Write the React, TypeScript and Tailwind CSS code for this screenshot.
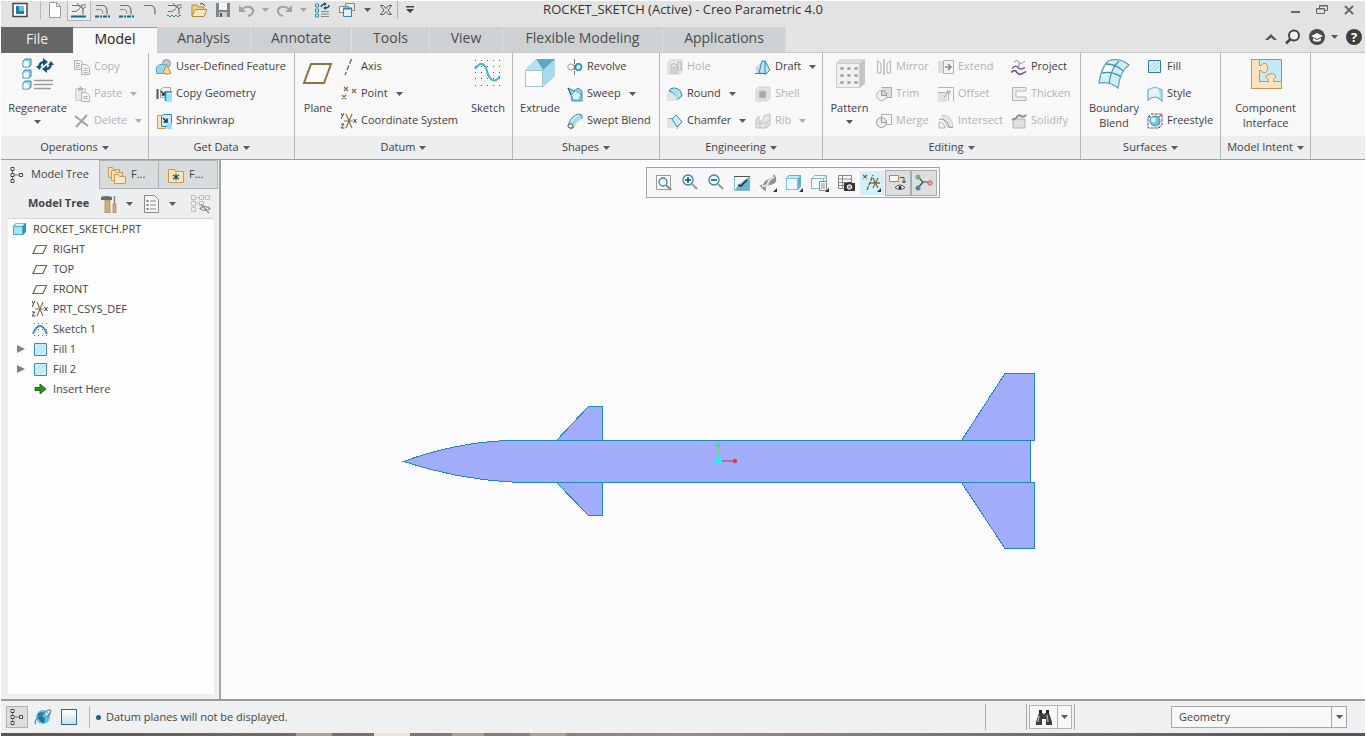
import type { ReactNode } from 'react'

type Kids = { children: ReactNode }

function Ico({ children, size = 16 }: Kids & { size?: number }) {
  return (
    <svg width={size} height={size} viewBox={`0 0 ${size} ${size}`} fill="none" className="shrink-0" aria-hidden="true">
      {children}
    </svg>
  )
}

function Caret({ className = 'text-[#5a5a5a]' }: { className?: string }) {
  return (
    <svg width="7" height="4" viewBox="0 0 7 4" className={`shrink-0 ${className}`} aria-hidden="true">
      <path d="M0 0h7L3.500 4z" fill="currentColor" />
    </svg>
  )
}

/* ---------- small ribbon icons ---------- */

const G = '#b4b4b4'
const BLUE = '#2b8cb2'
const SKY = '#cdeefa'

const copyIcon = (
  <Ico>
    <path d="M.5 1.500h6l2 2v7h-8zM2 4.500h4M2 6.500h4M2 8.500h3" stroke={G} fill="#efefef" />
    <path d="M7.500 5.500h5l3 3v7h-8z" stroke={G} fill="#f2f2f2" />
    <path d="M9.500 9.500h4M9.500 11.500h4M9.500 13.500h4" stroke={G} />
  </Ico>
)
const pasteIcon = (
  <Ico>
    <path d="M1.500 2.500h10v12h-10z" stroke="#cfcfcf" fill="#e8e8e8" />
    <path d="M4 3.500h5M5.500 1.500h2" stroke={G} strokeWidth="2" />
    <path d="M7.500 6.500h5l3 3v6h-8z" stroke={G} fill="#f4f4f4" />
    <path d="M9.500 10.500h4M9.500 12.500h4" stroke={G} />
  </Ico>
)
const deleteIcon = (
  <Ico>
    <path d="M1 3l13 10M13 2L2 14" stroke="#a2a2a2" strokeWidth="2" />
  </Ico>
)
const udfIcon = (
  <Ico>
    <circle cx="10.500" cy="4.500" r="4" fill="#c6c6d4" stroke="#8b8ba0" />
    <path d="M.5 8l3-2.500h7V12L8 14.500H.5z" fill="#9ad3ea" stroke="#5fabca" />
    <path d="M10.500 5.500L15 14q-4 2.500-8 0z" fill="#f3d49a" stroke="#b8924f" />
  </Ico>
)
const copyGeomIcon = (
  <Ico>
    <path d="M1.500 3v10" stroke="#555" strokeWidth="2" />
    <path d="M4.500 3.500l3-2h7v4h-5v6h-5z" fill="#f0f0f0" stroke="#a5a5a5" />
    <path d="M5 5l3.500 4M9 5.500V9H5.500" stroke="#333" strokeWidth="1.500" />
    <path d="M10 8h6v8h-6z" fill="#8fe3fa" />
    <path d="M9.500 15V7.500L11 6h5" stroke={BLUE} strokeWidth="1.500" />
  </Ico>
)
const shrinkIcon = (
  <Ico>
    <path d="M1.500 2.500h8v13h-8z" fill="#f9e4b9" stroke="#cc9a50" />
    <path d="M5.500 3.500l2-2h8v9l-3 3h-7z" fill="#c8ecf9" stroke={BLUE} />
    <path d="M7 5l4 4M11 5.500V9H7.500" stroke="#14364a" strokeWidth="1.500" />
    <path d="M11 10h5v6h-5z" fill="#8fe3fa" />
  </Ico>
)
const axisIcon = (
  <Ico>
    <path d="M10.500 0L4 16" stroke="#6f6048" strokeWidth="1.300" strokeDasharray="5 2" />
  </Ico>
)
const pointIcon = (
  <Ico>
    <path d="M3 1l4 4M7 1L3 5M11 3l4 4M15 3l-4 4M1 9l4 4M5 9l-4 4" stroke="#8a6a3c" strokeWidth="1.300" />
  </Ico>
)
const csysIcon = (
  <Ico>
    <path d="M3 8h9M5 1l6 14M11 1L5 15" stroke="#8f7144" strokeWidth="1.200" />
    <path d="M0 0l1.500 3M3 0L0 6M12.500 6l3 4M15.500 6l-3 4M0 11h3l-3 4h3.500" stroke="#444" />
  </Ico>
)
const revolveIcon = (
  <Ico>
    <ellipse cx="4" cy="8" rx="3.300" ry="3" stroke="#8fa0a9" fill="#fff" />
    <ellipse cx="11.500" cy="8" rx="3" ry="3.300" stroke={BLUE} strokeWidth="1.500" fill="#c9ecf9" />
    <path d="M7.500 0v16" stroke="#777" strokeDasharray="5 1" />
  </Ico>
)
const sweepIcon = (
  <Ico>
    <path d="M1 2l6 3 4-3 4 3v10H5L4 9z" fill="#8cd3ec" stroke={BLUE} />
    <path d="M4.500 9L8 5l6 3-2 6H6z" fill="#d8f2fb" stroke="#5fb0cd" />
    <path d="M1 2l3 7" stroke="#42515a" />
  </Ico>
)
const sweptIcon = (
  <Ico>
    <path d="M1 13Q3 4 11 1l4 1v4Q9 8 7 14l-3 2z" fill="#9bdaf1" stroke="#4f8eaa" />
    <path d="M7 14Q9 8 15 6M4 9q3-5 8-7" stroke="#fff" />
    <ellipse cx="3.500" cy="13" rx="2.500" ry="2" fill="#fff" stroke="#555" />
  </Ico>
)
const holeIcon = (
  <Ico>
    <path d="M1 4l2-3h12v12l-2 2H1z" fill="#e9e9e9" stroke="#d3d3d3" />
    <path d="M4 15V6q3-3 6 0v9M6 15V8h2v7M11 3h3v8h-3z" stroke={G} />
  </Ico>
)
const roundIcon = (
  <Ico>
    <path d="M0 6h9v9H0z" fill="#e1e4e6" />
    <path d="M2 5q1-3 5-3 7 0 8 8l-5 4Q10 7 2 5z" fill="#9adcf3" stroke={BLUE} />
    <path d="M10 14Q10 7 5 5M7 3q5 1 6 8" stroke="#def5fd" />
  </Ico>
)
const chamferIcon = (
  <Ico>
    <path d="M0 5h8v10H0z" fill="#e1e4e6" />
    <path d="M5 6l4-4 6 7-5 5z" fill="#c9effb" stroke={BLUE} />
    <path d="M1 5.500h4M10 14v2" stroke="#9aa4a9" />
  </Ico>
)
const draftIcon = (
  <Ico>
    <path d="M0 9l6-6v10l-4 2z" fill="#d5d9dc" />
    <path d="M4 14l3-12h3l5 9-4 4z" fill="#b7e6f7" stroke={BLUE} />
    <path d="M10 2v12M0 14.500h11" stroke={BLUE} />
  </Ico>
)
const shellIcon = (
  <Ico>
    <path d="M1 3l2-2h12v11l-3 3H1z" fill="#e2e2e2" stroke="#d3d3d3" />
    <path d="M4 5h7v7H4z" fill="#a8a8a8" stroke="#c8c8c8" />
  </Ico>
)
const ribIcon = (
  <Ico>
    <path d="M1 15V6l3-3v5q4 1 5-5l6-2v11l-4 3z" fill="#e6e6e6" stroke="#c0c0c0" />
    <path d="M1 10h10v5M5 15v-5M11 10l4-3" stroke="#c0c0c0" />
  </Ico>
)
const mirrorIcon = (
  <Ico>
    <path d="M8 0v16" stroke="#999" />
    <path d="M1.500 14V2q4 1 3.500 6v6zM14.500 14V2q-4 1-3.500 6v6z" stroke={G} fill="#f4f4f4" />
  </Ico>
)
const trimIcon = (
  <Ico>
    <path d="M5.500 1.500h10v10h-5" fill="#ddd" stroke="#aaa" />
    <circle cx="5.500" cy="9.500" r="5" stroke="#b0b0b0" fill="#f1f1f1" />
    <path d="M5.500 9.500v-5q5 0 5 5z" fill="#d2d2d2" stroke="#999" />
  </Ico>
)
const mergeIcon = (
  <Ico>
    <circle cx="5.500" cy="9.500" r="5" stroke="#999" fill="#ececec" />
    <path d="M5.500 4.500v-3h10v10h-5Q11 5 5.500 4.500z" fill="#f8f8f8" stroke="#aaa" />
    <path d="M5.500 5v4.500h5" stroke="#999" />
  </Ico>
)
const extendIcon = (
  <Ico>
    <path d="M0 2h6v12H0z" fill="#dedede" />
    <path d="M5.500 1.500h10v13h-10z" stroke="#b0b0b0" fill="#f4f4f4" />
    <path d="M7 8h6M10 5l3 3-3 3" stroke="#888" strokeWidth="1.500" />
  </Ico>
)
const offsetIcon = (
  <Ico>
    <path d="M0 6h9v10H0z" fill="#e2e2e2" />
    <path d="M0 1.500h15.500V15M10.500 15V6.500H0" stroke={G} />
    <path d="M6 11l6-6M8.500 5H12v3.500" stroke="#8a8a8a" strokeDasharray="2 1" />
  </Ico>
)
const intersectIcon = (
  <Ico>
    <path d="M4 2q10 0 11 12H9z" fill="#e6e6e6" stroke="#ccc" />
    <path d="M1 6q9 0 10 8.500h4" stroke="#999" />
    <path d="M1 9q5 0 6 6H1z" fill="#f4f4f4" stroke={G} />
  </Ico>
)
const projectIcon = (
  <Ico>
    <path d="M3 3q3-3 5 0t6-1" stroke="#a98f6c" />
    <path d="M1 9.500q4-4 6-1t7 0" stroke="#8a62b8" strokeWidth="1.500" />
    <path d="M0 13.500q4-4 6 0t9-1" stroke="#5d4a80" strokeWidth="1.500" />
    <path d="M8 4v4" stroke="#777" />
  </Ico>
)
const thickenIcon = (
  <Ico>
    <path d="M15 1.500H1.500v13H15V11H5V5h10z" stroke="#b4b4b4" fill="#eee" />
  </Ico>
)
const solidifyIcon = (
  <Ico>
    <path d="M2 6h12v9H2z" fill="#dfdfdf" stroke={G} />
    <path d="M1 6q3 1 5-2t4-1 5-1" stroke="#8f8f8f" strokeWidth="2" />
  </Ico>
)
const fillIcon = (
  <Ico>
    <path d="M1.500 1.500h12v12h-12z" fill={SKY} stroke="#2f7c9f" />
    <path d="M3 8l5-5M3 12l9-9M7 12l5-5" stroke="#9dd5e9" />
  </Ico>
)
const styleIcon = (
  <Ico>
    <path d="M1 14V4q7-5 14 0v11q-4-4-7-4t-7 3z" fill="#def3fb" stroke="#78a7bb" strokeWidth="1.200" />
    <path d="M12 4q2 1 1.500 8" stroke="#9bd9f0" strokeWidth="2" />
  </Ico>
)
const freestyleIcon = (
  <Ico>
    <path d="M1 4l3-3h11v11l-3 3H1zM1 4h11v11M12 4l3-3" stroke="#555" strokeDasharray="3 1" />
    <circle cx="8" cy="8" r="5" fill="#6fc3e2" stroke="#4697b6" />
    <circle cx="6.500" cy="7" r="2.500" fill="#d6f3fc" />
  </Ico>
)

/* ---------- large ribbon icons ---------- */

function MiniCube({ x, y }: { x: number; y: number }) {
  return (
    <g>
      <path d={`M${x} ${y + 2}l2-2h6v6l-2 2h-6z`} fill="#8fd4ec" stroke={BLUE} />
      <path d={`M${x + 0.5} ${y + 2.5}h5v5h-5z`} fill="#fff" />
    </g>
  )
}

const regenerateIcon = (
  <Ico size={32}>
    <MiniCube x={1} y={1} />
    <MiniCube x={1} y={12} />
    <MiniCube x={1} y={23} />
    <path d="M12 22.500h19M12 26.500h19M12 30.500h17" stroke="#9a9a9a" strokeWidth="1.500" />
    <path d="M17 9q1-5 5-5M29 6q-1 5-5 5" stroke="#17567a" strokeWidth="2.500" />
    <path d="M21 0l5 4-5 4zM25 7l-5 4 5 4zM14 8h6l-3 4zM26 7h6l-3-4z" fill="#17567a" />
  </Ico>
)
const planeIcon = (
  <Ico size={32}>
    <path d="M9 6h20l-7 19H2z" stroke="#937343" strokeWidth="2" fill="#fdfdfb" />
  </Ico>
)
const sketchIcon = (
  <Ico size={32}>
    <g fill="#555">
      {[3, 9, 15, 21, 27].map((x) => [2, 8, 14, 20, 27].map((y) => <rect key={`${x}-${y}`} x={x} y={y} width="1" height="1" />))}
    </g>
    <path d="M3 11C8 3 13 5 15 13s7 14 13 5" stroke="#4bb0d8" strokeWidth="2" />
  </Ico>
)
const extrudeIcon = (
  <Ico size={32}>
    <path d="M1 12L12 1h19v17L19 29H1z" fill="#8ccde5" />
    <path d="M12 1h19v17L19 12z" fill="#5ba9c8" />
    <path d="M1 12L12 1l7 11z" fill="#b5e2f2" />
    <path d="M19 12L31 1v17L19 29z" fill="#a8d9ec" />
    <path d="M1.500 12.500h17v16h-17z" fill="#fff" stroke="#9fc7d8" />
  </Ico>
)
const patternIcon = (
  <Ico size={32}>
    <path d="M2 5l4-4h25v24l-5 5H2z" fill="#dcdcdc" />
    <path d="M2.500 5.500h23v24h-23z" fill="#f0f0f0" stroke="#ccc" />
    <path d="M26 5l5-4v24l-5 5z" fill="#c6c6c6" />
    {[6, 13, 20].map((x) => [9, 16, 23].map((y) => <path key={`${x}-${y}`} d={`M${x} ${y}h4v3h-4z`} fill="#9d9d9d" stroke="#fff" strokeWidth=".5" />))}
  </Ico>
)
const boundaryIcon = (
  <Ico size={32}>
    <path d="M1 25Q3 10 10 3q11-4 21 4-9 6-11 23-8-7-19-5z" fill="#d0effa" stroke="#6fa0b4" strokeWidth="1.300" />
    <path d="M19 9q-7-4-11-2l-5 11q7-2 11 0z" fill="#fbfeff" />
    <path d="M11 26Q13 10 21 3M4 15q11-2 19 4M8 6q10 0 17 7" stroke="#3b98bc" strokeWidth="1.300" />
  </Ico>
)
const componentIcon = (
  <Ico size={32}>
    <path d="M1.500 1.500h30v29h-30z" fill="#c2ebf9" stroke="#58a5c2" />
    <path d="M1.500 1.500h8v6h2q1-3 4-2 3 2 2 6t-5 3l-1-2h-2v11h9v-2q-3-1-2-4 2-2 6-2 4 1 3 4l-2 2v2h8v7h-30z" fill="#f9e3bd" stroke="#c4965a" />
  </Ico>
)

/* ---------- ribbon pieces ---------- */

type ToolProps = { icon: ReactNode; label: string; disabled?: boolean; menu?: boolean }

function Tool({ icon, label, disabled, menu }: ToolProps) {
  return (
    <button
      type="button"
      disabled={disabled}
      className={`flex h-[27px] items-center gap-1 whitespace-nowrap ${disabled ? 'text-[#b3b3b3]' : 'text-[#3f3f3f]'}`}
    >
      {icon}
      {label}
      {menu && <span className="pl-1"><Caret className={disabled ? 'text-[#adadad]' : 'text-[#5a5a5a]'} /></span>}
    </button>
  )
}

function Big({ icon, label, menu, className }: { icon: ReactNode; label: string; menu?: boolean; className: string }) {
  return (
    <button type="button" className={`flex shrink-0 flex-col items-center justify-start pt-[5px] leading-[15px] text-[#3f3f3f] ${className}`}>
      {icon}
      <span className="mt-[10px] whitespace-pre-line">{label}</span>
      {menu && <span className="mt-[5px]"><Caret /></span>}
    </button>
  )
}

function Col({ tools, className = '' }: { tools: ToolProps[]; className?: string }) {
  return (
    <div className={`flex shrink-0 flex-col items-start ${className}`}>
      {tools.map((t) => <Tool key={t.label} {...t} />)}
    </div>
  )
}

function Group({ title, className, children }: Kids & { title: string; className: string }) {
  return (
    <section className={`flex shrink-0 flex-col border-r border-[#b4b6b8] ${className}`}>
      <div className="flex h-[83px]">{children}</div>
      <button type="button" className="flex h-[23px] items-center justify-center gap-1 whitespace-nowrap bg-[#eceef0] text-[#3f3f3f]">
        {title} <Caret />
      </button>
    </section>
  )
}

function Ribbon() {
  return (
    <div className="flex border-b border-[#9b9da0] bg-[#f8f8f9] text-[11px]">
      <Group title="Operations" className="w-[148px]">
        <Big icon={regenerateIcon} label="Regenerate" menu className="w-[73px]" />
        <Col
          tools={[
            { icon: copyIcon, label: 'Copy', disabled: true },
            { icon: pasteIcon, label: 'Paste', disabled: true, menu: true },
            { icon: deleteIcon, label: 'Delete', disabled: true, menu: true },
          ]}
        />
      </Group>
      <Group title="Get Data" className="w-[146px]">
        <Col
          className="pl-[7px]"
          tools={[
            { icon: udfIcon, label: 'User-Defined Feature' },
            { icon: copyGeomIcon, label: 'Copy Geometry' },
            { icon: shrinkIcon, label: 'Shrinkwrap' },
          ]}
        />
      </Group>
      <Group title="Datum" className="w-[218px]">
        <Big icon={planeIcon} label="Plane" className="w-[46px]" />
        <Col
          className="w-[122px]"
          tools={[
            { icon: axisIcon, label: 'Axis' },
            { icon: pointIcon, label: 'Point', menu: true },
            { icon: csysIcon, label: 'Coordinate System' },
          ]}
        />
        <Big icon={sketchIcon} label="Sketch" className="w-[50px]" />
      </Group>
      <Group title="Shapes" className="w-[147px]">
        <Big icon={extrudeIcon} label="Extrude" className="w-[54px]" />
        <Col
          tools={[
            { icon: revolveIcon, label: 'Revolve' },
            { icon: sweepIcon, label: 'Sweep', menu: true },
            { icon: sweptIcon, label: 'Swept Blend' },
          ]}
        />
      </Group>
      <Group title="Engineering" className="w-[163px]">
        <Col
          className="w-[95px] pl-[7px]"
          tools={[
            { icon: holeIcon, label: 'Hole', disabled: true },
            { icon: roundIcon, label: 'Round', menu: true },
            { icon: chamferIcon, label: 'Chamfer', menu: true },
          ]}
        />
        <Col
          tools={[
            { icon: draftIcon, label: 'Draft', menu: true },
            { icon: shellIcon, label: 'Shell', disabled: true },
            { icon: ribIcon, label: 'Rib', disabled: true, menu: true },
          ]}
        />
      </Group>
      <Group title="Editing" className="w-[258px]">
        <Big icon={patternIcon} label="Pattern" menu className="w-[53px]" />
        <Col
          className="w-[62px]"
          tools={[
            { icon: mirrorIcon, label: 'Mirror', disabled: true },
            { icon: trimIcon, label: 'Trim', disabled: true },
            { icon: mergeIcon, label: 'Merge', disabled: true },
          ]}
        />
        <Col
          className="w-[73px]"
          tools={[
            { icon: extendIcon, label: 'Extend', disabled: true },
            { icon: offsetIcon, label: 'Offset', disabled: true },
            { icon: intersectIcon, label: 'Intersect', disabled: true },
          ]}
        />
        <Col
          tools={[
            { icon: projectIcon, label: 'Project' },
            { icon: thickenIcon, label: 'Thicken', disabled: true },
            { icon: solidifyIcon, label: 'Solidify', disabled: true },
          ]}
        />
      </Group>
      <Group title="Surfaces" className="w-[140px]">
        <Big icon={boundaryIcon} label={'Boundary\nBlend'} className="w-[66px]" />
        <Col
          tools={[
            { icon: fillIcon, label: 'Fill' },
            { icon: styleIcon, label: 'Style' },
            { icon: freestyleIcon, label: 'Freestyle' },
          ]}
        />
      </Group>
      <Group title="Model Intent" className="w-[90px]">
        <Big icon={componentIcon} label={'Component\nInterface'} className="w-full" />
      </Group>
      <div className="flex flex-1 flex-col justify-end">
        <div className="h-[23px] bg-[#eceef0]" />
      </div>
    </div>
  )
}

/* ---------- title bar ---------- */

const sketchCurve = <path d="M1 3.500h6q5 0 5 6v3" stroke="#6f7274" strokeWidth="1.200" />
const branches = <path d="M1 9.500q5 1 8-3M9 6l2-3h4M9 5L6 1M11 7l4-2" stroke="#6f7274" />
const innerCurve = <path d="M1 7.500h4q3 0 3 4" stroke="#8c8f91" />

function Quick({ label, className = 'w-6', children }: Kids & { label: string; className?: string }) {
  return (
    <button type="button" aria-label={label} className={`flex h-[17px] shrink-0 items-center justify-center ${className}`}>
      {children}
    </button>
  )
}

function TitleBar() {
  return (
    <header className="grid h-[26px] grid-cols-[1fr_auto_1fr] items-start bg-[#e3e3e3]">
      <div className="flex items-start">
        <Quick label="Window" className="w-[38px]">
          <Ico>
            <path d="M1 1.500h14v13H1z" fill="#fff" stroke="#45484b" strokeWidth="1.500" />
            <path d="M4 4h8v8H4z" fill="#1b7fa6" />
            <path d="M7 4h5v5H7z" fill="#66c4e6" />
          </Ico>
        </Quick>
        <span className="mx-[1px] h-[18px] w-px bg-[#b9b9b9]" />
        <Quick label="New" className="w-[25px]">
          <Ico><path d="M2.500.5h7l4 4v11h-11z" fill="#fff" stroke="#9a9a9a" /><path d="M9.500.5v4h4" stroke="#9a9a9a" /></Ico>
        </Quick>
        <span className="flex h-5 items-start border border-t-0 border-[#b5b5b5] bg-[#ececec]">
          <Quick label="Sketch view" className="w-[22px]"><Ico>{sketchCurve}{branches}<path d="M0 14.500h15" stroke="#17678c" strokeWidth="2" /></Ico></Quick>
        </span>
        <Quick label="Hidden line"><Ico>{sketchCurve}{innerCurve}<path d="M0 14.500h16" stroke="#17678c" strokeWidth="2" strokeDasharray="4 1 2 1" /></Ico></Quick>
        <Quick label="No hidden"><Ico>{sketchCurve}{innerCurve}<path d="M0 14.500h16" stroke="#17678c" strokeWidth="2" strokeDasharray="4 1 2 1" /></Ico></Quick>
        <Quick label="Wireframe"><Ico>{sketchCurve}</Ico></Quick>
        <Quick label="Spline"><Ico>{sketchCurve}{branches}<path d="M0 14q1-2 2 0t2 0 2 0 2 0 2 0 2 0 2 0" stroke="#3d8a7c" /></Ico></Quick>
        <Quick label="Open">
          <Ico>
            <path d="M1 14V3h5l1 2h6v9z" fill="#f4d28b" stroke="#b08a45" />
            <path d="M1 14.500l3-7h12l-3 7z" fill="#fbe7b8" stroke="#b08a45" />
            <path d="M9 2q3-2 5 2" stroke="#444" />
          </Ico>
        </Quick>
        <Quick label="Save">
          <Ico>
            <path d="M1 1h14v14H1z" fill="#7d868d" />
            <path d="M4 1h8v7H4z" fill="#f2f5f7" />
            <path d="M4 10h8v5H4z" fill="#c9ced2" />
            <path d="M5 11h2v4H5z" fill="#555" />
          </Ico>
        </Quick>
        <Quick label="Undo"><Ico><path d="M3 7q4-3 8-2 4 2 3 5t-5 4" stroke="#a3a3a3" strokeWidth="2" /><path d="M0 3v7h7z" fill="#a3a3a3" /></Ico></Quick>
        <Quick label="Undo list" className="w-3"><Caret className="text-[#a5a5a5]" /></Quick>
        <Quick label="Redo" className="w-[26px]"><Ico><path d="M13 7Q9 4 5 5 1 7 2 10t5 4" stroke="#a3a3a3" strokeWidth="2" /><path d="M16 3v7H9z" fill="#a3a3a3" /></Ico></Quick>
        <Quick label="Redo list" className="w-3"><Caret className="text-[#a5a5a5]" /></Quick>
        <Quick label="Regenerate" className="w-[26px]">
          <Ico>
            <path d="M1.500 2h3v3h-3zM1.500 7h3v3h-3zM1.500 12h3v3h-3z" fill="#d9f1fa" stroke={BLUE} />
            <path d="M7 9.500h8M7 12h8M7 14.500h8" stroke="#888" />
            <path d="M7 5q1-3 4-3M15 3q0 3-4 3" stroke="#17567a" strokeWidth="1.500" />
            <path d="M10 0l3 2-3 2zM12 4L9 6l3 2z" fill="#17567a" />
          </Ico>
        </Quick>
        <Quick label="Windows">
          <Ico>
            <path d="M6.500 1.500h9v7h-9z" fill="#e8e8e8" stroke="#888" />
            <path d="M.5 4.500h9v6h-9z" fill="#f4f4f4" stroke="#888" />
            <path d="M4.500 6.500h8v8h-8z" fill="#dff3fb" stroke={BLUE} />
            <path d="M4 6.500h9" stroke={BLUE} strokeWidth="2" />
          </Ico>
        </Quick>
        <Quick label="Window list" className="w-4"><Caret /></Quick>
        <Quick label="Close window" className="w-[22px]">
          <Ico><path d="M2.500 3.500h3l2.500 3 2.500-3h3L10 8l3.500 4.500h-3L8 9.500l-2.500 3h-3L6 8z" stroke="#5a5a5a" /></Ico>
        </Quick>
        <span className="h-[18px] w-px bg-[#b0b0b0]" />
        <Quick label="Customize toolbar">
          <svg width="8" height="8" viewBox="0 0 8 8" aria-hidden="true"><path d="M0 0h8v1.500H0zM0 3h8L4 7z" fill="#444" /></svg>
        </Quick>
      </div>
      <h1 className="text-[13px] leading-[17px] whitespace-nowrap text-[#333]">ROCKET_SKETCH (Active) - Creo Parametric 4.0</h1>
      <div className="flex justify-end pr-[3px]">
        <Quick label="Minimize" className="w-[27px]"><Ico><path d="M4 10h9" stroke="#666" strokeWidth="2" /></Ico></Quick>
        <Quick label="Restore" className="w-[27px]">
          <Ico><path d="M5.500 6V3.500h8v5H11M2.500 6.500h8v5h-8z" stroke="#666" /><path d="M5 4h9M2 7h9" stroke="#666" /></Ico>
        </Quick>
        <Quick label="Close" className="w-[27px]"><Ico><path d="M4 4l8 8M12 4l-8 8" stroke="#666" strokeWidth="1.800" /></Ico></Quick>
      </div>
    </header>
  )
}

const TABS = [
  { name: 'File', width: 'w-[72px]' },
  { name: 'Model', width: 'w-[84px]' },
  { name: 'Analysis', width: 'w-[94px]' },
  { name: 'Annotate', width: 'w-[101px]' },
  { name: 'Tools', width: 'w-[78px]' },
  { name: 'View', width: 'w-[73px]' },
  { name: 'Flexible Modeling', width: 'w-[160px]' },
  { name: 'Applications', width: 'w-[123px]' },
]

function tabStyle(name: string) {
  if (name === 'File') return 'h-[26px] bg-[#666] text-[#eee]'
  if (name === 'Model') return 'h-[26px] bg-[#f8f8f9] text-[#222] border-t border-[#999]'
  return 'h-[25px] bg-[#cdd1d3] text-[#4c4c4c] border-r border-r-[#dcdfe0]'
}

function TabBar() {
  return (
    <div className="flex h-[26px] items-start justify-between border-b border-[#c6c8ca] bg-[#e3e3e3]">
      <nav className="flex items-start">
        {TABS.map((t) => (
          <button key={t.name} type="button" className={`pb-[3px] text-[14px] leading-[20px] whitespace-nowrap ${t.width} ${tabStyle(t.name)}`}>
            {t.name}
          </button>
        ))}
      </nav>
      <div className="flex h-5 items-center gap-2 pr-[3px]">
        <button type="button" aria-label="Collapse ribbon">
          <svg width="12" height="6" viewBox="0 0 12 6"><path d="M0 6l6-6 6 6H9L6 3.500 3 6z" fill="#555" /></svg>
        </button>
        <button type="button" aria-label="Search">
          <Ico><circle cx="9" cy="6.500" r="5" stroke="#444" strokeWidth="2" fill="#f4f4f4" /><path d="M5.500 10L1 14.500" stroke="#444" strokeWidth="2.500" /></Ico>
        </button>
        <button type="button" aria-label="Learning" className="flex items-center gap-1.5">
          <Ico><circle cx="8" cy="8" r="8" fill="#4a4a4a" /><path d="M2 7l6-3 6 3-6 3zM4 9v2.500q4 2.500 8 0V9L8 11z" fill="#f4f4f4" /></Ico>
          <Caret />
        </button>
        <button type="button" aria-label="Help" className="flex size-4 items-center justify-center rounded-full bg-[#3e3e3e] text-[13px] leading-4 font-bold text-white">?</button>
      </div>
    </div>
  )
}

/* ---------- model tree ---------- */

const treeIcon = (
  <Ico>
    <path d="M3.500 4v9M5 8h6" stroke="#777" />
    <path d="M2 .5h3v3H2zM2 6.500h3v3H2zM2 12.500h3v3H2zM10.500 6.500h3v3h-3z" fill="#fff" stroke="#444" />
  </Ico>
)
const smallPlane = <Ico><path d="M4.500 4.500h10l-3.500 8H1z" stroke="#7b6240" strokeWidth="1.200" /></Ico>
const treeSketch = (
  <Ico>
    <path d="M1 13Q4 5 8 5t7 8" stroke="#3b94b8" strokeWidth="2" />
    <path d="M2 2.500h14M2 8.500h14M2 14.500h14" stroke="#777" strokeDasharray="1 3" />
  </Ico>
)
const partIcon = (
  <Ico>
    <path d="M2 5l3-3h10v9l-3 3H2z" fill="#2f95bc" />
    <path d="M2.500 5.500h9v8h-9z" fill="#a9e2f6" stroke="#4cabd0" />
    <path d="M3 5l2.500-2.500H14L11.500 5z" fill="#d9f3fc" />
  </Ico>
)
const treeFill = (
  <Ico>
    <path d="M2.500 2.500h12v12h-12z" fill="#c9f1fd" stroke="#3c8db1" />
    <path d="M4 9l5-5M4 13l9-9M8 13l5-5" stroke="#a2dcf0" />
  </Ico>
)
const insertIcon = (
  <Ico><path d="M3 6.500h5V3l6 5-6 5V9.500H3z" fill="#1e9a16" stroke="#15470f" strokeWidth=".8" /></Ico>
)
const foldersIcon = (
  <Ico size={20}>
    <path d="M1.500 2.500h4l1 2h6v8h-11z" fill="#f7deaa" stroke="#c29a5d" />
    <path d="M4.500 5.500h4l1 2h6v8h-11z" fill="#f7deaa" stroke="#c29a5d" />
    <path d="M7.500 9.500h4l1 2h6v7h-11z" fill="#fbe9c4" stroke="#c29a5d" />
  </Ico>
)
const favoritesIcon = (
  <Ico size={18}>
    <path d="M1.500 3.500h6l1 2h8v11h-15z" fill="#fbe3b2" stroke="#c29a5d" />
    <path d="M9 7.500v7M6 9l6 4M12 9l-6 4" stroke="#15506d" strokeWidth="1.200" />
  </Ico>
)

const ITEMS = [
  { name: 'RIGHT', icon: smallPlane },
  { name: 'TOP', icon: smallPlane },
  { name: 'FRONT', icon: smallPlane },
  { name: 'PRT_CSYS_DEF', icon: csysIcon },
  { name: 'Sketch 1', icon: treeSketch },
  { name: 'Fill 1', icon: treeFill, branch: true },
  { name: 'Fill 2', icon: treeFill, branch: true },
  { name: 'Insert Here', icon: insertIcon },
]

function ModelTree() {
  return (
    <aside className="flex w-[220px] shrink-0 flex-col border-r-2 border-[#a2a4a7] bg-[#eceeef] text-[11px] text-[#444]">
      <div className="flex h-[29px] shrink-0">
        <button type="button" className="flex w-[98px] items-center gap-[6px] pl-2 whitespace-nowrap">{treeIcon} Model Tree</button>
        <button type="button" aria-label="Folder browser" className="flex w-[60px] items-center gap-1 border border-[#b0b3b5] bg-[#d9dcdd] pl-[7px]">{foldersIcon} F...</button>
        <button type="button" aria-label="Favorites" className="flex w-[59px] items-center gap-1 border border-l-0 border-[#b0b3b5] bg-[#d9dcdd] pl-2">{favoritesIcon} F...</button>
      </div>
      <div className="flex h-[29px] shrink-0 items-center pr-2 pl-[27px]">
        <h2 className="w-[72px] font-bold whitespace-nowrap">Model Tree</h2>
        <button type="button" aria-label="Tree settings" className="flex items-center gap-2">
          <Ico size={18}>
            <path d="M5 5h5v13H5z" fill="#d6ab74" stroke="#9a7444" strokeWidth=".6" />
            <path d="M1 2q5-2 11 0v3H4L1 5z" fill="#666e74" />
            <path d="M14.500 1v9" stroke="#888" strokeWidth="1.500" />
            <path d="M13 9h3v9h-3z" fill="#d6ab74" stroke="#9a7444" strokeWidth=".6" />
          </Ico>
          <Caret />
        </button>
        <button type="button" aria-label="Show items" className="flex items-center gap-2 pl-[10px]">
          <Ico size={18}>
            <path d="M1.500.5h10l4 4v13h-14z" fill="#f7f7f7" stroke="#888" />
            <path d="M3.500 6h2M3.500 10h2M3.500 14h2" stroke="#555" strokeWidth="1.500" />
            <path d="M7 6h6M7 10h6M7 14h6" stroke="#888" />
          </Ico>
          <Caret />
        </button>
        <button type="button" aria-label="Hidden items" className="ml-auto">
          <Ico size={20}>
            <path d="M2.500 4v12M5 3.500h12M5 9h6" stroke="#c4c4c4" />
            <path d="M.5 1.500h4v4h-4zM.5 7.500h4v4h-4zM.5 13.500h4v4h-4zM8.500 1.500h4v4h-4zM14.500 1.500h4v4h-4zM8.500 7.500h4v4h-4z" stroke="#bfbfbf" fill="#eee" />
            <path d="M9 14.500q5-4 10 0-5 4-10 0zM10 10l8 9" stroke="#888" strokeWidth="1.200" />
          </Ico>
        </button>
      </div>
      <div className="mr-[5px] mb-[5px] ml-[7px] min-h-0 flex-1 border-t border-[#d4d6d8] bg-[#fdfdfe]">
        <button type="button" className="flex h-5 items-center gap-[6px] pl-[3px]">{partIcon} ROCKET_SKETCH.PRT</button>
        <ul>
          {ITEMS.map((it) => (
            <li key={it.name} className="flex h-5 items-center pl-[9px]">
              <span className="w-[15px]">
                {it.branch && <svg width="8" height="8" viewBox="0 0 8 8"><path d="M0 0l8 4-8 4z" fill="#838383" /></svg>}
              </span>
              <button type="button" className="flex items-center gap-[5px] whitespace-nowrap">{it.icon} {it.name}</button>
            </li>
          ))}
        </ul>
      </div>
    </aside>
  )
}

/* ---------- graphics area ---------- */

const corner = <path d="M19 15v4h-4z" fill="#333" />

const VIEW_TOOLS: { name: string; bg?: string; icon: ReactNode }[] = [
  { name: 'Refit', icon: <><path d="M2.500 2.500h14v14h-14z" stroke="#999" fill="#fff" /><circle cx="9" cy="9" r="4" stroke="#3583a6" strokeWidth="1.300" fill="#eaf7fc" /><path d="M12 12l5 5" stroke="#94877c" strokeWidth="2" /></> },
  { name: 'Zoom in', icon: <><circle cx="8" cy="7" r="5" stroke="#3583a6" strokeWidth="1.300" fill="#eaf7fc" /><path d="M8 4v6M5 7h6" stroke="#174e69" strokeWidth="1.500" /><path d="M12 11l5 5" stroke="#a59586" strokeWidth="2" /></> },
  { name: 'Zoom out', icon: <><circle cx="8" cy="7" r="5" stroke="#3583a6" strokeWidth="1.300" fill="#eaf7fc" /><path d="M5 7h6" stroke="#174e69" strokeWidth="1.500" /><path d="M12 11l5 5" stroke="#a59586" strokeWidth="2" /></> },
  { name: 'Repaint', icon: <><path d="M2.500 3.500h15v14h-15z" fill="#eff8fb" stroke="#8bb6c7" /><path d="M17 4v13H3q3-6 14-13z" fill="#68b3cf" /><path d="M2 3.500h16" stroke="#555" /><path d="M6 12l3 1 6-6" stroke="#222" strokeWidth="1.500" /></> },
  { name: 'Rendering', icon: <><path d="M1 12q4 1 5-2t5-4 5-5q3 4 2 7t-6 4-4 5-7-5z" fill="#8f8f8f" /><path d="M4 13q5 1 6-3t6-6" stroke="#e2e2e2" strokeWidth="2" />{corner}</> },
  { name: 'Display style', icon: <><path d="M2 5l3-3h12v11l-3 4H2z" fill="#58b4d5" /><path d="M2.500 5.500h11v11h-11z" fill="#eefafe" stroke="#7cc3dc" /><path d="M3 5l2-2h11l-2 2z" fill="#c6ebf8" />{corner}</> },
  { name: 'Saved orientations', icon: <><path d="M1.500 5.500l3-3h12v10l-3 3h-12z" fill="#f3fbfe" stroke="#82b8cc" /><path d="M1.500 5.500h12l3-3M13.500 5.500v4" stroke="#82b8cc" /><path d="M9.500 8.500h7v9h-7z" fill="#fff" stroke="#888" /><path d="M11 11h4M11 13h4M11 15h4" stroke="#888" />{corner}</> },
  { name: 'View manager', icon: <><path d="M2.500 2.500h13v13h-13zM2.500 6h13M2.500 9.500h13M2.500 12.500h13M6.500 2.500v13" stroke="#888" fill="#fafafa" /><path d="M8 10h3l1-1h3l1 1h3v8H8z" fill="#333" /><circle cx="13.500" cy="14" r="2.300" fill="#999" stroke="#fff" /></> },
  { name: 'Datum display', bg: 'bg-[#d3effb]', icon: <><path d="M1 2l4 4M5 2L1 6M5 17l6-15" stroke="#6a6040" strokeWidth="1.300" strokeDasharray="4 1" /><path d="M8 10h10M11 5l5 10M16 5l-5 10" stroke="#7d7042" strokeWidth="1.300" />{corner}</> },
  { name: 'Annotation display', bg: 'bg-[#dcdee0] outline outline-[#aaa]', icon: <><path d="M1.500 2.500h9v6h-9z" stroke="#b08950" fill="#fffdf7" /><path d="M12 4.500h4v5M14 8l2 2 2-2" stroke="#444" /><path d="M7 14.500q5-5 10 0-5 4-10 0z" stroke="#444" fill="#fff" /><circle cx="12" cy="14.500" r="1.600" fill="#222" /></> },
  { name: 'Spin center', bg: 'bg-[#dcdee0] outline outline-[#aaa]', icon: <><path d="M4 4l5 5-5 6M9 9h6" stroke="#444" strokeWidth="1.200" /><circle cx="4" cy="4" r="2.500" fill="#7faa7b" /><circle cx="4" cy="15" r="2.500" fill="#5387aa" /><circle cx="16" cy="10" r="2.200" fill="#f1a0a0" stroke="#c96060" /></> },
]

function Canvas() {
  return (
    <main className="relative min-w-0 flex-1 bg-[#fbfbfd]">
      <svg viewBox="221 160 1144 539" className="absolute inset-0 size-full" role="img" aria-label="Rocket sketch">
        <g fill="#a1adfb" stroke="#1c8ab4" shapeRendering="crispEdges">
          <path d="M556.500 440.500l32-34h14v34zM556.500 482.500l32 33h14v-33z" />
          <path d="M961.500 440.500l43.500-67h29.500v67zM961.500 482.500l43.500 66h29.500v-66z" />
          <path d="M403.500 461.500q52-19 104-21h523v42H530q-62 0-126.500-21z" />
        </g>
        <path d="M718.500 461v-16" stroke="#55dd7b" strokeWidth="1.500" />
        <circle cx="718.500" cy="445.500" r="2" fill="#43e36a" />
        <path d="M718 461h16" stroke="#d63a5a" strokeWidth="1.200" />
        <circle cx="735" cy="461" r="2.200" fill="#e8334d" />
        <circle cx="718.500" cy="461" r="3.500" fill="#1ff0ff" />
      </svg>
      <div className="relative flex justify-center pt-[7px]">
        <div className="flex h-[31px] items-center gap-[2px] border border-[#a3a3a6] bg-[#f7f7f9] pr-[3px] pl-[5px]">
          {VIEW_TOOLS.map((t) => (
            <button key={t.name} type="button" aria-label={t.name} className={`flex h-6 w-6 items-center justify-center ${t.bg ?? ''}`}>
              <Ico size={20}>{t.icon}</Ico>
            </button>
          ))}
        </div>
      </div>
    </main>
  )
}

/* ---------- status bar ---------- */

function StatusBar() {
  return (
    <footer className="flex h-[34px] shrink-0 items-center border-t-2 border-[#98999b] bg-[#eef0f1] text-[11px] text-[#444]">
      <button type="button" aria-label="Toggle tree" className="ml-[5px] flex size-[22px] items-center justify-center border border-[#b0b0b0] bg-[#dcdddd]">{treeIcon}</button>
      <button type="button" aria-label="Browser" className="ml-[6px]">
        <Ico size={18}>
          <circle cx="9" cy="9" r="7" fill="#63bce0" />
          <path d="M4 6q3-3 6-1l-2 4 3 1-1 5-3-1-3-4z" fill="#1f719a" />
          <path d="M11 3l3 3-1 3z" fill="#e7f6fc" />
          <path d="M2 16q-3-3 5-9t9-5q2 3-3 7" stroke="#4f869f" strokeWidth="1.200" />
        </Ico>
      </button>
      <button type="button" aria-label="Full screen" className="ml-[9px] size-4 border border-[#2f6a86] bg-linear-to-b from-white to-[#c8dfe9]" />
      <span className="mr-[6px] ml-3 h-[22px] w-px bg-[#b2b3b5]" />
      <span className="mr-[5px] size-[5px] rounded-full bg-[#1d5f82]" />
      <p>Datum planes will not be displayed.</p>
      <div className="ml-auto flex items-center">
        <span className="mr-10 h-[26px] w-px bg-[#aaa]" />
        <span className="h-[26px] w-px bg-[#aaa]" />
        <div className="mx-[2px] flex h-6 border border-[#b3b3b3] bg-[#f8f8f8]">
          <button type="button" aria-label="Find" className="flex w-[27px] items-center justify-center">
            <Ico size={18}>
              <path d="M4 2h3v3H4zM11 2h3v3h-3z" fill="#222" />
              <path d="M4 5h4l1 2 1-2h4l3 9v3h-6v-6H7v6H1v-3z" fill="#3c3c3c" />
              <path d="M4 8l-1 6M12 7l1 7" stroke="#aaa" strokeWidth="1.500" />
            </Ico>
          </button>
          <button type="button" aria-label="Find options" className="flex w-[14px] items-center justify-center border-l border-[#b3b3b3]"><Caret /></button>
        </div>
        <span className="h-[26px] w-px bg-[#aaa]" />
        <div className="relative mr-[18px] ml-24 flex">
          <select aria-label="Selection filter" className="h-[22px] w-[176px] appearance-none border border-[#a6a8aa] bg-[#f8f8f9] pl-[7px] outline-none">
            <option>Geometry</option>
          </select>
          <span className="pointer-events-none absolute inset-y-px right-px flex w-[15px] items-center justify-center border-l border-[#a6a8aa]"><Caret /></span>
        </div>
      </div>
    </footer>
  )
}

export default function App() {
  return (
    <div className="flex h-screen flex-col bg-white p-px font-['Open_Sans','Noto_Sans',sans-serif] text-[12px]">
      <TitleBar />
      <TabBar />
      <Ribbon />
      <div className="flex min-h-0 flex-1">
        <ModelTree />
        <Canvas />
      </div>
      <StatusBar />
      <div className="flex h-[3px] shrink-0 bg-linear-to-r from-[#5c534d] via-[#9a8c84] to-[#57505c]">
        <span className="ml-[295px] w-9 bg-[#ab9f96]" />
        <span className="ml-[42px] w-9 bg-[#eee3d5]" />
        <span className="ml-[42px] w-8 bg-[#ab9f96]" />
        <span className="ml-[46px] w-9 bg-[#ab9f96]" />
      </div>
    </div>
  )
}
